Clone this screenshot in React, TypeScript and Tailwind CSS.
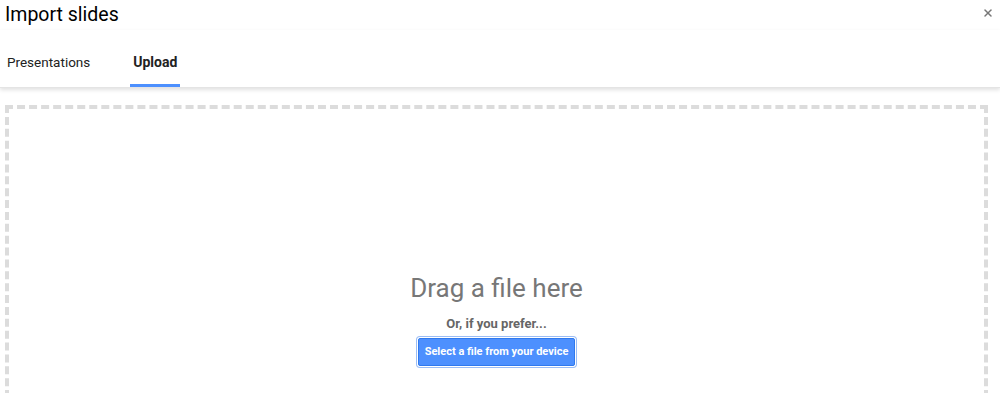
import { X } from 'lucide-react';

export default function App() {
  return (
    <div className="w-[1000px] h-[393px] overflow-hidden bg-white font-['Roboto',sans-serif]">
      {/* Header */}
      <div className="flex items-center justify-between h-[30px] pl-[5px] pr-[6px]">
        <h1 className="text-[19.5px] leading-[30px] text-[#000]">Import slides</h1>
        <button className="text-[#777] -mt-[4px]">
          <X size={12} strokeWidth={3} />
        </button>
      </div>

      {/* Tabs */}
      <div className="relative flex h-[58px] pt-[17px] border-b border-[#e4e4e4] shadow-[0_2px_4px_rgba(0,0,0,0.12)]">
        <div className="px-[7px] text-[13.5px] leading-[30px] text-[#222]">Presentations</div>
        <div className="ml-[33px] w-[50px] flex flex-col items-center">
          <div className="text-[14px] leading-[30px] font-bold text-[#222]">Upload</div>
          <div className="mt-[7px] h-[3px] w-full bg-[#4d90fe]" />
        </div>
      </div>

      {/* Drop zone */}
      <div className="pt-[17px] pl-[5px] pr-[12px]">
        <div className="h-[400px] border-4 border-dashed border-[#dcdcdc] flex flex-col items-center pt-[162px]">
          <div className="text-[26px] leading-[34px] text-[#777]">Drag a file here</div>
          <div className="mt-[11px] text-[13px] leading-[16px] font-bold text-[#666]">Or, if you prefer...</div>
          <button className="mt-[6px] h-[28px] px-[6px] rounded-[2px] border border-[#3079ed] bg-[#4d90fe] text-white text-[11px] font-bold shadow-[0_0_0_1px_#fff,0_0_0_2px_#9bbdf5]">
            Select a file from your device
          </button>
        </div>
      </div>
    </div>
  );
}
